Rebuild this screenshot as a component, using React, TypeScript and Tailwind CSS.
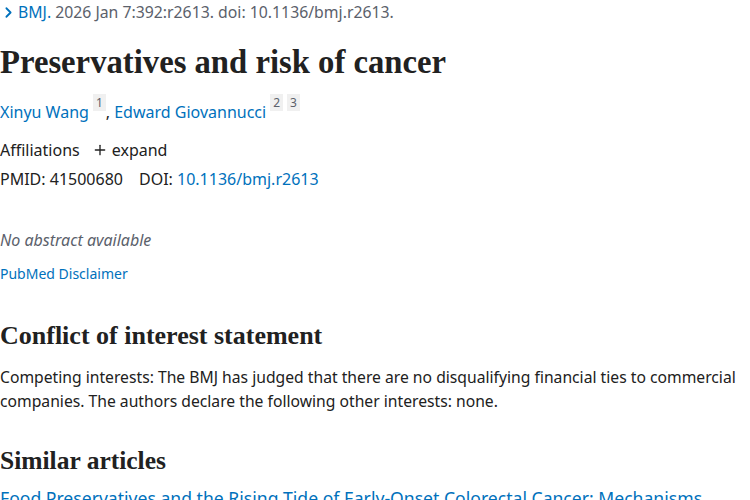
import { ChevronRight, Plus } from "lucide-react";

const sans = "font-['Noto_Sans',sans-serif]";
const serif = "font-['Liberation_Serif',serif]";

const Sup = ({ n }: { n: string }) => (
  <sup className="ml-1 bg-[#f0f0f0] px-[3px] text-[12px] text-[#5b616b] align-[5px]">{n}</sup>
);

export default function App() {
  return (
    <div className={`${sans} w-[750px] h-[500px] overflow-hidden bg-white text-[#212121] text-[16px]`}>
      {/* citation */}
      <div className="flex items-center pt-[1px] h-[24px] text-[15.8px] text-[#5b616b]">
        <ChevronRight className="w-[17px] h-[17px] text-[#0071bc]" strokeWidth={2.5} />
        <a className="ml-[1px] text-[#0071bc]">BMJ.</a>
        <span className="ml-[4px]">2026 Jan 7:392:r2613. doi: 10.1136/bmj.r2613.</span>
      </div>

      <h1 className={`${serif} mt-[18px] text-[32.7px] font-bold leading-[40px]`}>
        Preservatives and risk of cancer
      </h1>

      <div className="mt-[18px] leading-[24px] text-[#0071bc]">
        <a>Xinyu Wang</a>
        <Sup n="1" />
        <span className="text-[#212121]">, </span>
        <a>Edward Giovannucci</a>
        <Sup n="2" />
        <Sup n="3" />
      </div>

      <div className="mt-[14px] flex items-center leading-[24px]">
        <span>Affiliations</span>
        <Plus className="ml-[12px] w-[16px] h-[16px]" strokeWidth={2} />
        <span className="ml-[4px]">expand</span>
      </div>

      <div className="mt-[5px] leading-[24px]">
        <span>PMID: 41500680</span>
        <span className="ml-[16px]">DOI: </span>
        <a className="text-[#0071bc]">10.1136/bmj.r2613</a>
      </div>

      <p className="mt-[37px] italic text-[#5b616b] leading-[24px]">No abstract available</p>

      <a className="block mt-[10px] text-[14px] leading-[24px] text-[#0071bc]">PubMed Disclaimer</a>

      <h2 className={`${serif} mt-[35px] text-[26px] font-bold leading-[30px]`}>
        Conflict of interest statement
      </h2>

      <p className="mt-[14px] text-[15.7px] leading-[24px] whitespace-nowrap">
        Competing interests: The BMJ has judged that there are no disqualifying financial ties to commercial
        <br />
        companies. The authors declare the following other interests: none.
      </p>

      <h2 className={`${serif} mt-[33px] text-[25.5px] font-bold leading-[30px]`}>Similar articles</h2>

      <a className="block mt-[10px] text-[17.6px] leading-[24px] text-[#0071bc] whitespace-nowrap">
        Food Preservatives and the Rising Tide of Early-Onset Colorectal Cancer: Mechanisms
      </a>
    </div>
  );
}
